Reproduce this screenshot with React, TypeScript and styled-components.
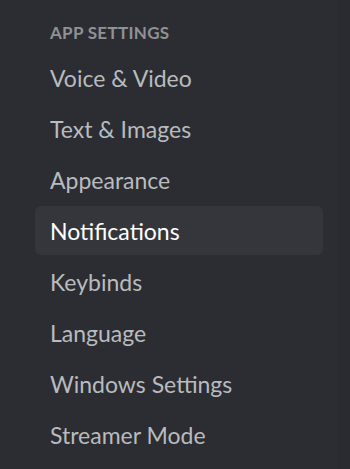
import styled, { createGlobalStyle } from "styled-components";

const GlobalStyle = createGlobalStyle`
  html, body {
    margin: 0;
    padding: 0;
    background: #2c2d32;
  }
`;

const Sidebar = styled.nav`
  display: flex;
  width: 350px;
  height: 469px;
  background: #2c2d32;
  font-family: Lato, "Open Sans", sans-serif;
  overflow: hidden;
`;

const Column = styled.div`
  display: flex;
  flex-direction: column;
  gap: 2px;
  width: 288px;
  padding: 23px 0 0 35px;
`;

const Edge = styled.div`
  margin-left: auto;
  width: 13px;
  background: #2a2b30;
`;

const Header = styled.h2`
  margin: 0 0 8px;
  padding: 0 15px;
  font-size: 17px;
  font-weight: 700;
  letter-spacing: 0.3px;
  line-height: 20px;
  color: #8e9297;
`;

const Item = styled.div<{ $active?: boolean }>`
  display: flex;
  align-items: center;
  height: 49px;
  padding: 0 15px;
  border-radius: 6px;
  font-size: 23px;
  color: ${(p) => (p.$active ? "#ffffff" : "#b9bbbe")};
  background: ${(p) => (p.$active ? "#35363c" : "transparent")};
`;

const items = [
  "Voice & Video",
  "Text & Images",
  "Appearance",
  "Notifications",
  "Keybinds",
  "Language",
  "Windows Settings",
  "Streamer Mode",
];

export default function App() {
  return (
    <>
      <GlobalStyle />
      <Sidebar>
        <Column>
          <Header>APP SETTINGS</Header>
          {items.map((label) => (
            <Item key={label} $active={label === "Notifications"}>
              {label}
            </Item>
          ))}
        </Column>
        <Edge />
      </Sidebar>
    </>
  );
}
